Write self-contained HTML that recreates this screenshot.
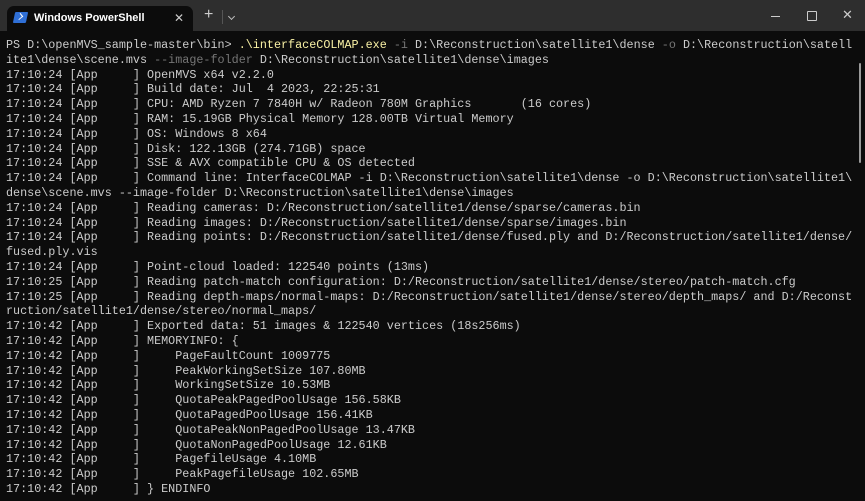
<!DOCTYPE html>
<html><head><meta charset="utf-8"><style>
html,body{margin:0;padding:0;width:865px;height:501px;overflow:hidden;background:#0c0c0c;}
.tb{position:absolute;left:0;top:0;width:865px;height:31px;background:#2e2e2e;}
.tab{position:absolute;left:7px;top:6px;width:186px;height:26px;background:#0c0c0c;border-radius:7px 7px 0 0;}
.tab .t{position:absolute;left:27px;top:6px;font:600 11px "Liberation Sans",sans-serif;color:#fff;}
.tab .x{position:absolute;left:167px;top:5px;font:12px "Liberation Sans",sans-serif;color:#ccc;}
.ic{position:absolute;left:7px;top:6px;width:13px;height:11px;background:#2f6fd6;transform:skewX(-12deg);border-radius:1px;}
.ic:after{content:"";position:absolute;left:3px;top:2px;width:4px;height:4px;border-right:1.3px solid #fff;border-bottom:1.3px solid #fff;transform:rotate(-45deg);}
.plus{position:absolute;left:204px;top:6px;font:16px "Liberation Sans",sans-serif;color:#ccc;}
.sep{position:absolute;left:222px;top:10px;width:1px;height:14px;background:#555;}
.chev{position:absolute;left:229px;top:14px;width:4px;height:4px;border-right:1.2px solid #bbb;border-bottom:1.2px solid #bbb;transform:rotate(45deg);}
.min{position:absolute;left:771px;top:16px;width:9px;height:1px;background:#ccc;}
.max{position:absolute;left:807px;top:11px;width:8px;height:8px;border:1px solid #ccc;border-radius:1px;}
.cls{position:absolute;left:842px;top:7px;font:13px "Liberation Sans",sans-serif;color:#ccc;}
pre{position:absolute;left:6px;top:38px;margin:0;font:11.75px/14.8px "Liberation Mono",monospace;color:#cccccc;white-space:pre;}
.y{color:#f9f1a5}.g{color:#767676}
.sb{position:absolute;left:859px;top:63px;width:2px;height:100px;background:#9a9a9a;border-radius:1px;}
</style></head><body>
<div class="tb">
<div class="tab"><div class="ic"></div><span class="t">Windows PowerShell</span><span class="x">✕</span></div>
<span class="plus">+</span><div class="sep"></div><div class="chev"></div>
<div class="min"></div><div class="max"></div><span class="cls">✕</span>
</div>
<pre>PS D:\openMVS_sample-master\bin&gt; <span class="y">.\interfaceCOLMAP.exe</span> <span class="g">-i</span> D:\Reconstruction\satellite1\dense <span class="g">-o</span> D:\Reconstruction\satell
ite1\dense\scene.mvs <span class="g">--image-folder</span> D:\Reconstruction\satellite1\dense\images
17:10:24 [App     ] OpenMVS x64 v2.2.0
17:10:24 [App     ] Build date: Jul  4 2023, 22:25:31
17:10:24 [App     ] CPU: AMD Ryzen 7 7840H w/ Radeon 780M Graphics       (16 cores)
17:10:24 [App     ] RAM: 15.19GB Physical Memory 128.00TB Virtual Memory
17:10:24 [App     ] OS: Windows 8 x64
17:10:24 [App     ] Disk: 122.13GB (274.71GB) space
17:10:24 [App     ] SSE &amp; AVX compatible CPU &amp; OS detected
17:10:24 [App     ] Command line: InterfaceCOLMAP -i D:\Reconstruction\satellite1\dense -o D:\Reconstruction\satellite1\
dense\scene.mvs --image-folder D:\Reconstruction\satellite1\dense\images
17:10:24 [App     ] Reading cameras: D:/Reconstruction/satellite1/dense/sparse/cameras.bin
17:10:24 [App     ] Reading images: D:/Reconstruction/satellite1/dense/sparse/images.bin
17:10:24 [App     ] Reading points: D:/Reconstruction/satellite1/dense/fused.ply and D:/Reconstruction/satellite1/dense/
fused.ply.vis
17:10:24 [App     ] Point-cloud loaded: 122540 points (13ms)
17:10:25 [App     ] Reading patch-match configuration: D:/Reconstruction/satellite1/dense/stereo/patch-match.cfg
17:10:25 [App     ] Reading depth-maps/normal-maps: D:/Reconstruction/satellite1/dense/stereo/depth_maps/ and D:/Reconst
ruction/satellite1/dense/stereo/normal_maps/
17:10:42 [App     ] Exported data: 51 images &amp; 122540 vertices (18s256ms)
17:10:42 [App     ] MEMORYINFO: {
17:10:42 [App     ]     PageFaultCount 1009775
17:10:42 [App     ]     PeakWorkingSetSize 107.80MB
17:10:42 [App     ]     WorkingSetSize 10.53MB
17:10:42 [App     ]     QuotaPeakPagedPoolUsage 156.58KB
17:10:42 [App     ]     QuotaPagedPoolUsage 156.41KB
17:10:42 [App     ]     QuotaPeakNonPagedPoolUsage 13.47KB
17:10:42 [App     ]     QuotaNonPagedPoolUsage 12.61KB
17:10:42 [App     ]     PagefileUsage 4.10MB
17:10:42 [App     ]     PeakPagefileUsage 102.65MB
17:10:42 [App     ] } ENDINFO</pre>
<div class="sb"></div>
</body></html>
